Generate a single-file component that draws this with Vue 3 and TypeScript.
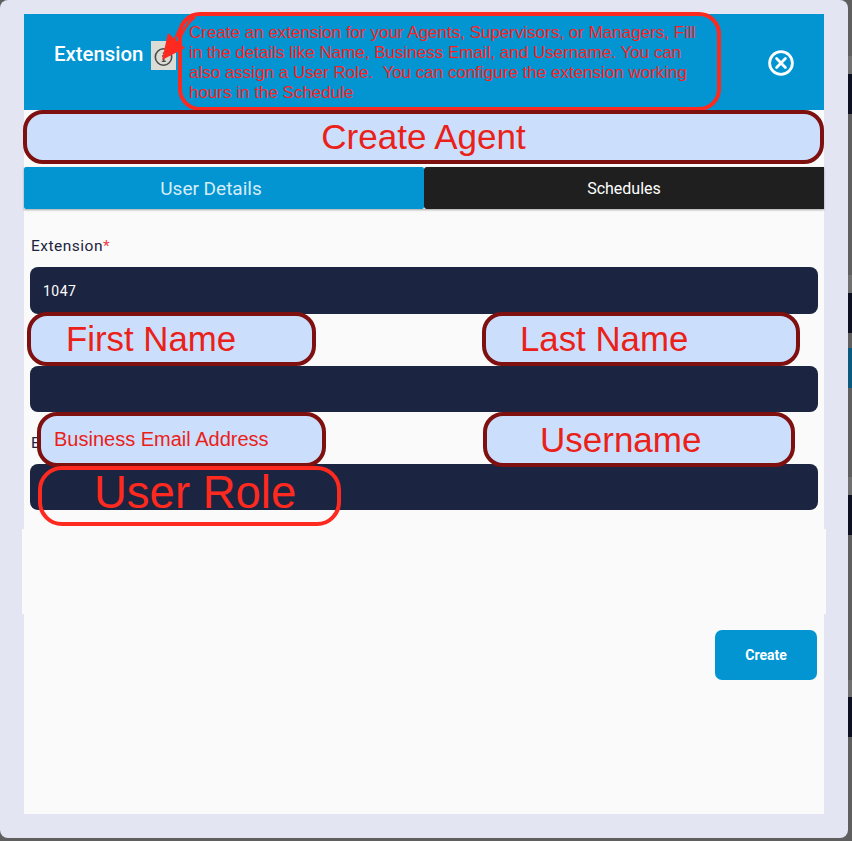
<script setup lang="ts">
const stripes: string[] = ['base h56', 'light h18', 'dark h40', 'base h161', 'light h18', 'dark h40', 'base h15', 'teal h40', 'base h89', 'light h18', 'dark h40', 'base h145', 'light h17', 'dark h40', 'base h104']
</script>

<template>
  <div class="page">
    <main class="modal">
      <div class="sheet">
        <header class="head">
          <h1 class="title">Extension</h1>
          <span class="info">
            <svg width="25" height="29" viewBox="0 0 25 29" aria-hidden="true">
              <circle cx="12.5" cy="16" r="8.2" fill="none" stroke="#4a4a4a" stroke-width="1.6" />
              <path d="M12.5 11.5v1.6M11 15h1.8v5M10.8 20.4h4" fill="none" stroke="#4a4a4a" stroke-width="1.4" />
            </svg>
          </span>
          <button class="close" type="button" aria-label="Close">
            <svg width="28" height="28" viewBox="0 0 28 28" aria-hidden="true">
              <circle cx="14" cy="14" r="11.4" fill="none" stroke="#fff" stroke-width="2.8" />
              <path d="M9.6 9.6l8.8 8.8M18.4 9.6l-8.8 8.8" fill="none" stroke="#fff" stroke-width="2.8" stroke-linecap="round" />
            </svg>
          </button>
        </header>
        <nav class="tabs">
          <button class="tab active" type="button">User Details</button>
          <button class="tab dark-tab" type="button">Schedules</button>
        </nav>
        <form class="form" @submit.prevent>
          <label class="label">Extension<em>*</em></label>
          <div class="input first">1047</div>
          <div class="input second"></div>
          <label class="label third-label">E</label>
          <div class="input third"></div>
          <div class="band"></div>
          <div class="actions"><button class="create" type="submit">Create</button></div>
        </form>
      </div>

      <div class="note callout">Create an extension for your Agents, Supervisors, or Managers, Fill<br />in the details like Name, Business Email, and Username. You can<br />also assign a User Role.&nbsp; You can configure the extension working<br />hours in the Schedule</div>
      <svg class="arrow" width="50" height="60" viewBox="0 0 50 60" aria-hidden="true">
        <path d="M5 47L11 20L28 35Z" fill="#ff2a1f" />
        <path d="M16 32C20 22 22 11 36 3M20 33C24 24 27 12 38 4" fill="none" stroke="#ff2a1f" stroke-width="2.4" />
      </svg>
      <div class="tag create-agent">Create Agent</div>
      <div class="tag first-name">First Name</div>
      <div class="tag last-name">Last Name</div>
      <div class="tag email">Business Email Address</div>
      <div class="tag username">Username</div>
      <div class="tag role">User Role</div>
    </main>
    <aside class="backdrop">
      <div v-for="(s, i) in stripes" :key="i" :class="s"></div>
    </aside>
  </div>
</template>

<style>
html, body { margin: 0; background: #5f5f5f; }
</style>

<style scoped>
.page { display: flex; width: 852px; height: 841px; overflow: hidden; background: #5f5f5f; font-family: Roboto, "Liberation Sans", sans-serif; }
.modal { position: relative; box-sizing: border-box; width: 848px; height: 838px; padding: 14px 24px 24px; background: #e3e5f3; border-radius: 8px; flex: none; }
.sheet { height: 800px; background: #fafafa; display: flex; flex-direction: column; }
.head { height: 96px; flex: none; background: #0295d1; display: flex; align-items: flex-start; color: #fff; }
.title { margin: 27px 0 0 30px; font-size: 20.4px; line-height: 26px; font-weight: 500; width: 97px; white-space: nowrap; }
.info { margin-top: 27px; width: 25px; height: 29px; background: #dcdcd6; display: block; }
.info svg { display: block; }
.close { margin: 35px 29px 0 auto; padding: 0; width: 28px; height: 28px; background: none; border: 0; }
.close svg { display: block; }
.tabs { display: flex; margin-top: 57px; height: 42px; flex: none; box-shadow: 0 1px 2px rgba(0,0,0,.35); }
.tab { flex: 0 0 50%; border: 0; padding: 0; font-family: inherit; border-radius: 2px; }
.active { background: #0295d1; color: #d6ecf8; font-size: 19px; padding-right: 26px; }
.dark-tab { background: #1f1f1f; color: #fff; font-size: 16px; font-weight: 400; border-radius: 3px 0 0 3px; }
.form { position: relative; padding: 27px 6px 0 6px; flex: 1; display: flex; flex-direction: column; }
.label { font-size: 15.5px; line-height: 20px; color: #1b2440; letter-spacing: .5px; padding-left: 1px; }
.label em { color: #f03a4a; font-style: normal; }
.input { box-sizing: border-box; height: 47px; background: #1b2440; border-radius: 8px; color: #fff; font-size: 14px; line-height: 49px; padding-left: 13px; letter-spacing: .5px; }
.first { margin-top: 11px; }
.second { margin-top: 52px; height: 46px; }
.third-label { margin-top: 21px; }
.third { margin-top: 11px; height: 46px; }
.band { height: 85px; margin: 19px -8px 0; background: #fafafa; }
.actions { display: flex; justify-content: flex-end; margin-top: 16px; padding-right: 1px; }
.create { width: 102px; height: 50px; border: 0; border-radius: 7px; background: #0295d1; color: #fff; font-family: inherit; font-size: 14px; font-weight: 700; }

.note { position: absolute; box-sizing: border-box; left: 178px; top: 12px; width: 543px; height: 99px; border: 4px solid #ff2a1f; border-radius: 22px; padding: 7px 0 0 7px; background: #0295d1; color: #ff1f1f; font: 17px/20px "Liberation Sans", sans-serif; white-space: nowrap; }
.arrow { position: absolute; left: 157px; top: 13px; }
.tag { position: absolute; box-sizing: border-box; background: #cbdefc; border: 4px solid #7f1010; border-radius: 20px; color: #ea2118; font-family: "Liberation Sans", sans-serif; white-space: nowrap; display: flex; align-items: center; }
.create-agent { left: 23px; top: 110px; width: 801px; height: 54px; justify-content: center; font-size: 35px; }
.first-name { left: 27px; top: 312px; width: 289px; height: 54px; padding-left: 35px; font-size: 34.8px; }
.last-name { left: 482px; top: 312px; width: 318px; height: 54px; padding-left: 34px; font-size: 34.8px; }
.email { left: 37px; top: 412px; width: 289px; height: 55px; padding-left: 13px; font-size: 20px; }
.username { left: 483px; top: 412px; width: 312px; height: 55px; padding-left: 53px; font-size: 35px; }
.role { left: 38px; top: 466px; width: 303px; height: 60px; padding: 0 0 6px 52px; border-color: #ff2a1f; background: none; color: #ff2a1f; font-size: 45.5px; border-radius: 24px; }

.backdrop { width: 4px; flex: none; }
.base { background: #5f5f5f; }
.light { background: #707070; }
.dark { background: #0d1020; }
.teal { background: #0a5a7f; }
.h15 { height: 15px; } .h17 { height: 17px; } .h18 { height: 18px; } .h40 { height: 40px; } .h56 { height: 56px; } .h89 { height: 89px; } .h104 { height: 104px; } .h145 { height: 145px; } .h161 { height: 161px; }
</style>
